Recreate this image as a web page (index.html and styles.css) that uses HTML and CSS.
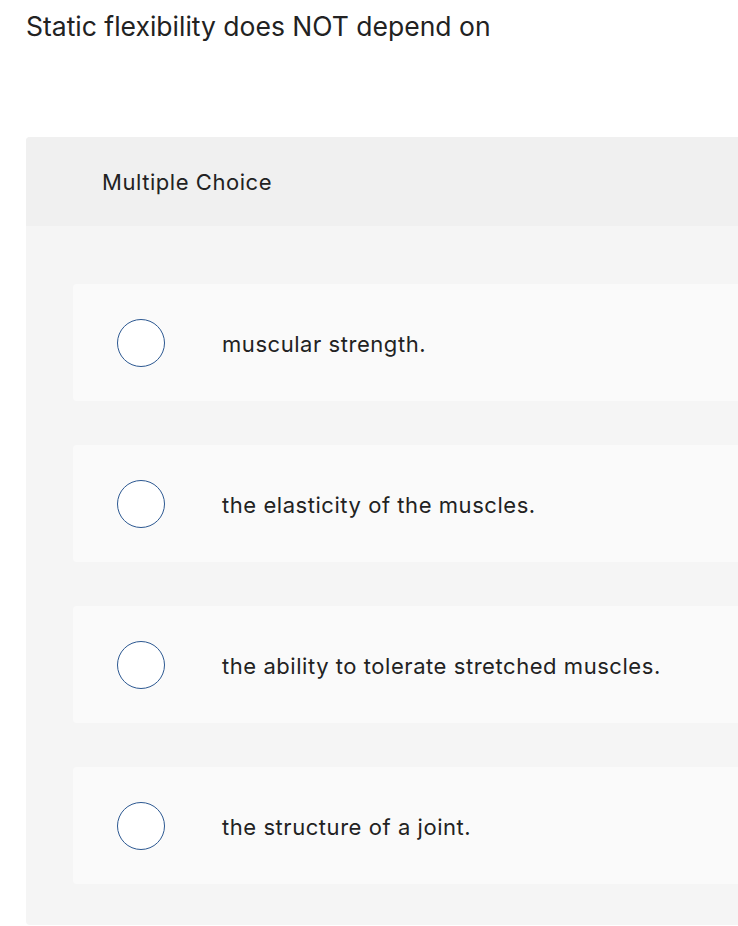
FILE: index.html
```html
<!DOCTYPE html>
<html>
<head>
<meta charset="utf-8">
<link rel="stylesheet" href="styles.css">
</head>
<body>
<div class="page">
  <h1 class="question">Static flexibility does NOT depend on</h1>
  <div class="card">
    <div class="card-header">Multiple Choice</div>
    <div class="card-body">
      <div class="option"><span class="radio"></span><span class="label">muscular strength.</span></div>
      <div class="option"><span class="radio"></span><span class="label">the elasticity of the muscles.</span></div>
      <div class="option"><span class="radio"></span><span class="label">the ability to tolerate stretched muscles.</span></div>
      <div class="option"><span class="radio"></span><span class="label">the structure of a joint.</span></div>
    </div>
  </div>
</div>
</body>
</html>
```
FILE: styles.css
```css
html, body {
  margin: 0;
  padding: 0;
  background: #fff;
}
.page {
  font-family: Inter, "Liberation Sans", sans-serif;
  color: #222;
  padding-left: 26px;
}
.question {
  margin: 0 0 94px;
  padding-top: 9px;
  font-size: 26.5px;
  font-weight: 400;
  line-height: 34px;
}
.card {
  background: #f5f5f5;
  border-radius: 4px 0 0 4px;
  overflow: hidden;
}
.card-header {
  background: #f0f0f0;
  height: 89px;
  padding-left: 76px;
  display: flex;
  align-items: center;
  font-size: 22px;
  letter-spacing: 0.55px;
}
.card-body {
  padding: 58px 0 41px 47px;
  display: flex;
  flex-direction: column;
  gap: 44px;
}
.option {
  background: #fafafa;
  height: 117px;
  border-radius: 4px 0 0 4px;
  display: flex;
  align-items: center;
  padding-left: 44px;
}
.radio {
  width: 46px;
  height: 46px;
  border: 1px solid #2c5891;
  border-radius: 50%;
  background: #fff;
  flex: none;
}
.label {
  margin: 3px 0 0 57px;
  font-size: 22px;
  letter-spacing: 0.55px;
}
```
